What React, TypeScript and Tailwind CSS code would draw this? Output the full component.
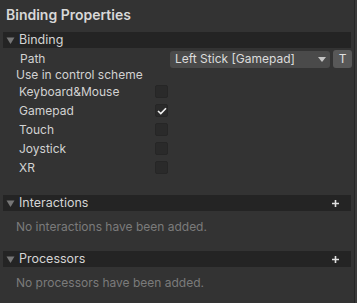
import React from "react";

const Tri = () => (
  <svg width="9" height="9" viewBox="0 0 9 9" className="shrink-0">
    <path d="M0.5 1.5 L8.5 1.5 L4.5 8 Z" fill="#767676" />
  </svg>
);

const Plus = () => (
  <svg width="9" height="9" viewBox="0 0 9 9">
    <path d="M4.5 1 V8 M1 4.5 H8" stroke="#e0e0e0" strokeWidth="1.6" />
  </svg>
);

const SectionHeader = ({ title, plus }: { title: string; plus?: boolean }) => (
  <div className="mx-[3px] h-[16px] bg-[#242424] flex items-center pl-[3px] pr-[11px]">
    <Tri />
    <span className="ml-[4px] text-[12.5px] text-[#d4d4d4] leading-none flex-1">{title}</span>
    {plus && <Plus />}
  </div>
);

const Check = ({ on }: { on?: boolean }) => (
  <div className="w-[13px] h-[13px] rounded-[2px] bg-[#2a2a2a] border border-[#262626] flex items-center justify-center">
    {on && (
      <svg width="10" height="8" viewBox="0 0 10 8">
        <path d="M1 4 L3.8 6.6 L9 1.2" stroke="#f0f0f0" strokeWidth="1.6" fill="none" />
      </svg>
    )}
  </div>
);

const schemes = [
  { name: "Keyboard&Mouse", on: false },
  { name: "Gamepad", on: true },
  { name: "Touch", on: false },
  { name: "Joystick", on: false },
  { name: "XR", on: false },
];

export default function App() {
  return (
    <div
      className="w-[357px] h-[303px] bg-[#333333] flex overflow-hidden"
      style={{ fontFamily: "Inter, 'Noto Sans', sans-serif" }}
    >
      <div className="flex-1 flex flex-col">
        <div className="h-[32px] flex items-center pl-[6px] pb-[3px]">
          <span className="text-[14px] font-semibold text-[#d8d8d8] leading-none">Binding Properties</span>
        </div>
        <SectionHeader title="Binding" />
        <div className="flex items-center h-[18px] mt-[2px] pl-[20px] pr-[2px]">
          <span className="text-[12px] text-[#d2d2d2] w-[150px] leading-none">Path</span>
          <div className="w-[160px] h-[17px] bg-[#4a4a4a] rounded-[3px] flex items-center pl-[5px] pr-[4px]">
            <span className="text-[12px] text-[#dcdcdc] flex-1 leading-none">Left Stick [Gamepad]</span>
            <svg width="8" height="5" viewBox="0 0 8 5">
              <path d="M0 0 L8 0 L4 5 Z" fill="#c4c4c4" />
            </svg>
          </div>
          <div className="ml-[3px] w-[19px] h-[18px] bg-[#585858] rounded-[3px] flex items-center justify-center text-[12px] text-[#e0e0e0] leading-none">
            T
          </div>
        </div>
        <div className="pl-[16px] h-[14px] flex items-center text-[12px] text-[#d2d2d2] leading-none">Use in control scheme</div>
        <div className="flex flex-col">
          {schemes.map((s) => (
            <div key={s.name} className="h-[19px] flex items-center pl-[19px]">
              <span className="w-[136px] text-[12px] text-[#d2d2d2] leading-none">{s.name}</span>
              <Check on={s.on} />
            </div>
          ))}
        </div>
        <div className="h-[18px]" />
        <SectionHeader title="Interactions" plus />
        <div className="h-[32px] pl-[16px] flex items-center text-[12px] text-[#7b7b7b] leading-none">No interactions have been added.</div>
        <div className="h-[8px]" />
        <SectionHeader title="Processors" plus />
        <div className="h-[32px] pl-[16px] flex items-center text-[12px] text-[#7b7b7b] leading-none">No processors have been added.</div>
      </div>
      <div className="w-[4px] border-l border-[#262626] bg-[#3a3a3a]" />
    </div>
  );
}
